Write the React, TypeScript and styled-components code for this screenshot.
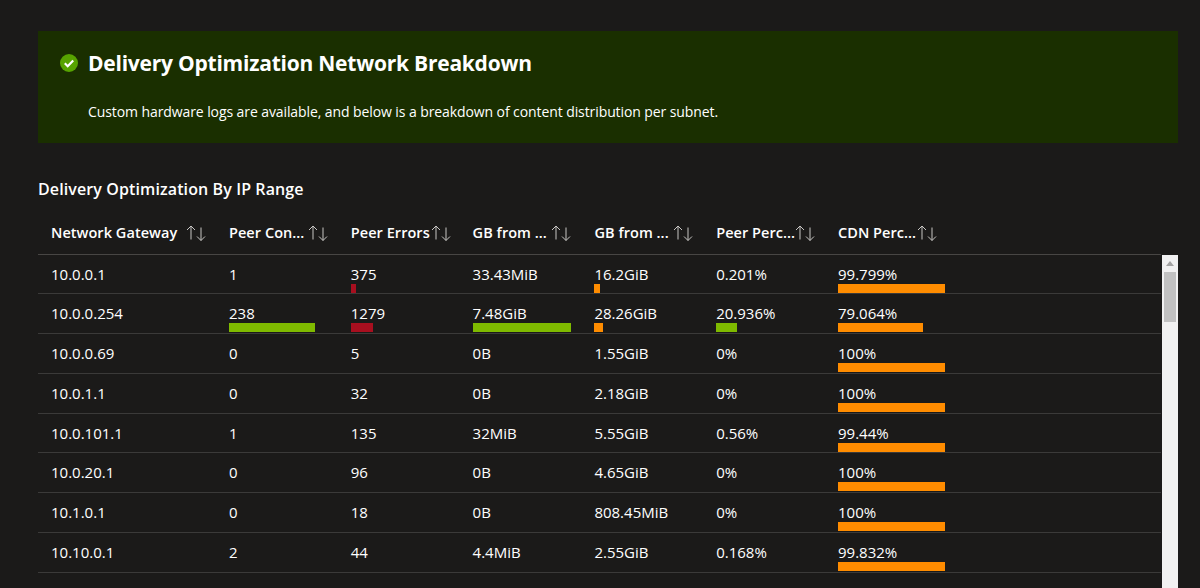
import styled, { createGlobalStyle } from "styled-components";

const GlobalStyle = createGlobalStyle`
    html, body {
        margin: 0;
        height: 100%;
        overflow: hidden;
        background-color: #1b1a19;
    }
    body {
        font-family: "Open Sans", "Noto Sans", "Liberation Sans", sans-serif;
        color: #fff;
    }
`;

const Page = styled.div`
    height: 588px;
    overflow: hidden;
    padding: 31px 22px 0 38px;
`;

const Banner = styled.div`
    height: 112px;
    box-sizing: border-box;
    background-color: #1a2f00;
    padding: 16px 22px;
`;

const BannerTitle = styled.div`
    display: flex;
    align-items: center;
    gap: 10px;
    height: 32px;
    font-size: 21px;
    font-weight: 700;
    letter-spacing: -0.23px;
`;

const BannerText = styled.div`
    margin: 23px 0 0 28px;
    font-size: 14px;
    letter-spacing: -0.09px;
    line-height: 20px;
`;

const SectionTitle = styled.div`
    margin-top: 35px;
    height: 22px;
    line-height: 22px;
    font-size: 16px;
    font-weight: 600;
    letter-spacing: 0.11px;
`;

const COLUMNS = "178px repeat(6, 121.8px)";

const HeaderRow = styled.div`
    display: grid;
    grid-template-columns: ${COLUMNS};
    height: 43px;
    margin-top: 11px;
    margin-right: 17px;
    border-bottom: 1px solid #484644;
`;

const HeaderCell = styled.div`
    display: flex;
    align-items: center;
    padding-left: 13px;
    font-size: 14.5px;
    font-weight: 600;
    letter-spacing: 0.05px;
    white-space: nowrap;
`;

const SortIcon = styled.svg<{ $gap: number }>`
    margin-left: ${(p) => p.$gap}px;
    flex: none;
`;

const TableBody = styled.div`
    display: flex;
    margin-top: -0.5px;
`;

const Rows = styled.div`
    flex: 1;
    min-width: 0;
`;

const Row = styled.div`
    display: grid;
    grid-template-columns: ${COLUMNS};
    height: 39.75px;
    box-sizing: border-box;
    border-bottom: 1px solid #3b3a39;
`;

const Cell = styled.div`
    padding: 9px 13px 0;
    font-size: 15px;
    line-height: 20px;
    white-space: nowrap;
`;

const Bar = styled.div<{ $color: string }>`
    height: 9px;
    background-color: ${(p) => p.$color};
`;

const Scrollbar = styled.div`
    width: 16px;
    margin-left: 1px;
    height: 400px;
    background-color: #f1f1f1;
    padding: 0 1px;
    box-sizing: border-box;
`;

const ScrollArrow = styled.div`
    height: 17px;
    display: flex;
    align-items: center;
    justify-content: center;
    &::before {
        content: "";
        border-left: 4px solid transparent;
        border-right: 4px solid transparent;
        border-bottom: 5px solid #a3a3a3;
    }
`;

const ScrollThumb = styled.div`
    margin: 0 1px;
    height: 50px;
    background-color: #c1c1c1;
`;

const GREEN = "#7fba00";
const RED = "#a80f1f";
const ORANGE = "#ff8c00";

type Value = { text: string; bar?: number; color?: string };

const v = (text: string, bar?: number, color?: string): Value => ({ text, bar, color });

const headers: { label: string; gap: number }[] = [
    { label: "Network Gateway", gap: 9 },
    { label: "Peer Con...", gap: 4 },
    { label: "Peer Errors", gap: 1 },
    { label: "GB from ...", gap: 4 },
    { label: "GB from ...", gap: 4 },
    { label: "Peer Perc...", gap: 0 },
    { label: "CDN Perc...", gap: 1 },
];

const rows: Value[][] = [
    [v("10.0.0.1"), v("1"), v("375", 5, RED), v("33.43MiB"), v("16.2GiB", 6, ORANGE), v("0.201%"), v("99.799%", 107, ORANGE)],
    [v("10.0.0.254"), v("238", 86, GREEN), v("1279", 22, RED), v("7.48GiB", 98, GREEN), v("28.26GiB", 9, ORANGE), v("20.936%", 21, GREEN), v("79.064%", 85, ORANGE)],
    [v("10.0.0.69"), v("0"), v("5"), v("0B"), v("1.55GiB"), v("0%"), v("100%", 107, ORANGE)],
    [v("10.0.1.1"), v("0"), v("32"), v("0B"), v("2.18GiB"), v("0%"), v("100%", 107, ORANGE)],
    [v("10.0.101.1"), v("1"), v("135"), v("32MiB"), v("5.55GiB"), v("0.56%"), v("99.44%", 107, ORANGE)],
    [v("10.0.20.1"), v("0"), v("96"), v("0B"), v("4.65GiB"), v("0%"), v("100%", 107, ORANGE)],
    [v("10.1.0.1"), v("0"), v("18"), v("0B"), v("808.45MiB"), v("0%"), v("100%", 107, ORANGE)],
    [v("10.10.0.1"), v("2"), v("44"), v("4.4MiB"), v("2.55GiB"), v("0.168%"), v("99.832%", 107, ORANGE)],
    [v("10.10.125.1"), v("0"), v("0"), v("0B"), v("5.55GiB"), v("0%"), v("100%", 107, ORANGE)],
];

const CheckBadge = () => (
    <svg width="18" height="18" viewBox="0 0 18 18">
        <circle cx="9" cy="9" r="9" fill="#57a300" />
        <path d="M4.8 9.3l2.9 2.9L13.2 6.4" fill="none" stroke="#fff" strokeWidth="2.2" />
    </svg>
);

const SortArrows = ({ gap }: { gap: number }) => (
    <SortIcon $gap={gap} width="20" height="16" viewBox="0 0 20 16" fill="none" stroke="#c8c6c4" strokeWidth="1">
        <path d="M5 14.5V1M1 5l4-4 4 4" />
        <path d="M15 2.5v13M11 11.5l4 4 4-4" />
    </SortIcon>
);

const App = () => {
    return (
        <Page>
            <GlobalStyle />
            <Banner>
                <BannerTitle>
                    <CheckBadge />
                    Delivery Optimization Network Breakdown
                </BannerTitle>
                <BannerText>
                    Custom hardware logs are available, and below is a breakdown of content distribution per subnet.
                </BannerText>
            </Banner>
            <SectionTitle>Delivery Optimization By IP Range</SectionTitle>
            <HeaderRow>
                {headers.map((h, i) => (
                    <HeaderCell key={i}>
                        {h.label}
                        <SortArrows gap={h.gap} />
                    </HeaderCell>
                ))}
            </HeaderRow>
            <TableBody>
                <Rows>
                    {rows.map((row, i) => (
                        <Row key={i}>
                            {row.map((cell, j) => (
                                <Cell key={j}>
                                    {cell.text}
                                    {cell.bar && cell.color ? (
                                        <Bar $color={cell.color} style={{ width: cell.bar }} />
                                    ) : null}
                                </Cell>
                            ))}
                        </Row>
                    ))}
                </Rows>
                <Scrollbar>
                    <ScrollArrow />
                    <ScrollThumb />
                </Scrollbar>
            </TableBody>
        </Page>
    );
};

export default App;
